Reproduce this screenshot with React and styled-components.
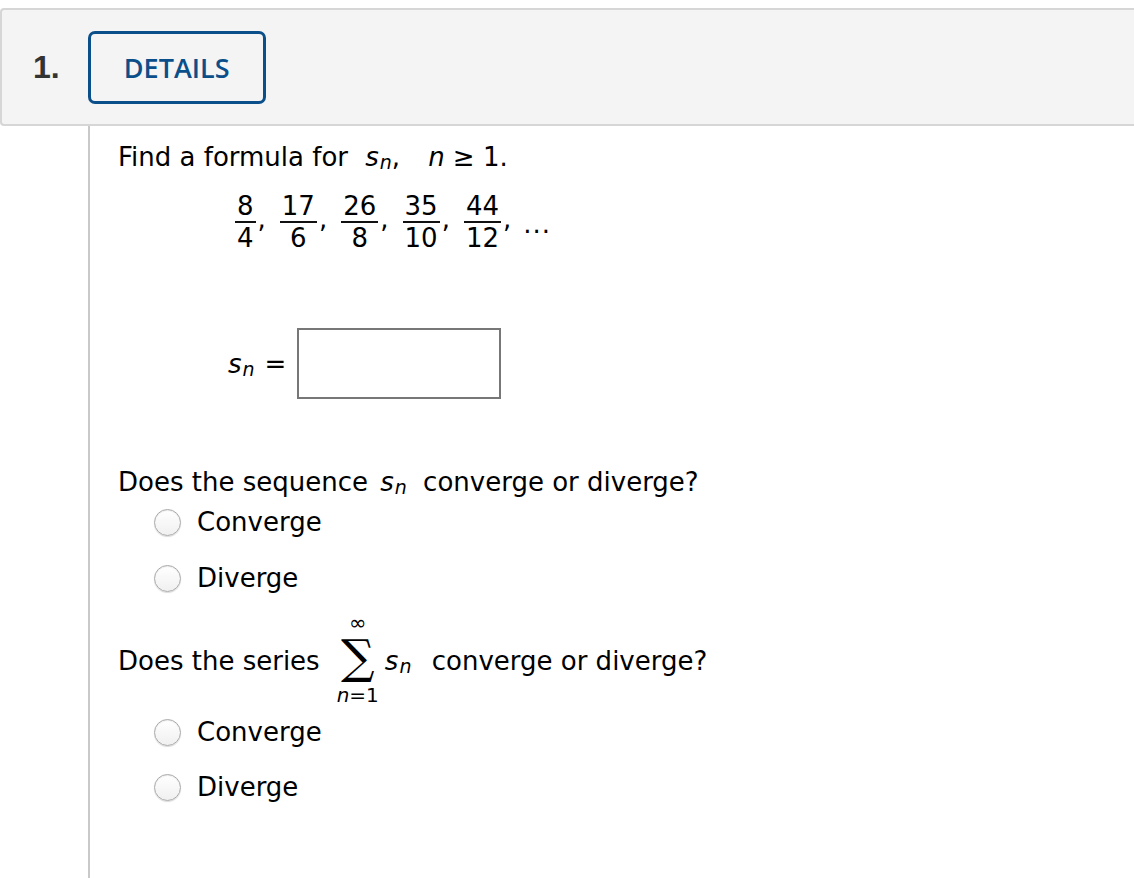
import React from "react";
import styled, { createGlobalStyle } from "styled-components";

const GlobalStyle = createGlobalStyle`
  html, body {
    margin: 0;
    padding: 0;
    background: #ffffff;
  }
  body {
    font-family: "DejaVu Sans", Verdana, sans-serif;
    color: #000;
  }
`;

const Header = styled.div`
  box-sizing: border-box;
  margin-top: 8px;
  height: 118px;
  display: flex;
  align-items: center;
  padding-left: 31px;
  background: #f4f4f4;
  border: 2px solid #d6d6d6;
  border-right: none;
  border-radius: 4px 0 0 4px;
`;

const Number = styled.span`
  font-family: "Liberation Sans", Arial, sans-serif;
  font-weight: 700;
  font-size: 32px;
  color: #333;
`;

const DetailsButton = styled.button`
  box-sizing: border-box;
  margin-left: 28px;
  width: 178px;
  height: 73px;
  border: 3px solid #0b4f8a;
  border-radius: 7px;
  background: transparent;
  color: #0b4f8a;
  font-family: "Open Sans", sans-serif;
  font-weight: 600;
  font-size: 27px;
  padding: 0;
  cursor: pointer;
`;

const Content = styled.div`
  box-sizing: border-box;
  margin-left: 88px;
  min-height: calc(100vh - 126px);
  border-left: 2px solid #c9c9c9;
  padding: 16px 0 40px 28px;
  font-size: 26px;
`;

const Line = styled.div`
  display: flex;
  align-items: center;
  line-height: 30px;
  margin-top: ${(p) => p.$mt || 0}px;
  margin-left: ${(p) => p.$ml || 0}px;
  white-space: pre;
`;

const Var = styled.span`
  font-style: italic;
`;

const Sub = styled.span`
  font-style: italic;
  font-size: 19px;
  position: relative;
  top: 5px;
  margin-left: 1px;
`;

const Gap = styled.span`
  display: inline-block;
  width: ${(p) => p.$w}px;
`;

const Fraction = styled.span`
  display: inline-flex;
  flex-direction: column;
  align-items: center;
  padding: 0 2px;
`;

const Numer = styled.span`
  line-height: 30px;
  padding: 0 2px;
`;

const Rule = styled.span`
  align-self: stretch;
  height: 2px;
  background: #111;
`;

const Denom = styled.span`
  line-height: 30px;
  padding: 0 2px;
`;

const Comma = styled.span`
  margin-bottom: 6px;
  margin-right: 12px;
`;

const Dots = styled.span`
  margin-top: 4px;
  letter-spacing: 1px;
`;

const AnswerBox = styled.input`
  box-sizing: border-box;
  width: 204px;
  height: 71px;
  border: 2px solid #777;
  margin-left: 11px;
  font-size: 22px;
  padding: 0 8px;
  outline: none;
`;

const RadioRow = styled.label`
  display: flex;
  align-items: center;
  line-height: 30px;
  margin-left: 36px;
  margin-top: ${(p) => p.$mt || 0}px;
  cursor: pointer;
`;

const RadioCircle = styled.span`
  box-sizing: border-box;
  width: 27px;
  height: 27px;
  border-radius: 50%;
  border: 1px solid #a9a9a9;
  background: linear-gradient(#ffffff, #f0f0f0);
  box-shadow: inset 0 1px 1px rgba(0, 0, 0, 0.08), 0 1px 1px rgba(0, 0, 0, 0.15);
  margin-right: 16px;
`;

const SigmaBlock = styled.span`
  display: inline-flex;
  flex-direction: column;
  align-items: center;
  margin: 0 6px 0 17px;
`;

const Infinity = styled.span`
  font-size: 21px;
  line-height: 18px;
`;

const Sigma = styled.span`
  font-family: "DejaVu Serif", "Liberation Serif", serif;
  font-size: 47px;
  line-height: 50px;
  height: 50px;
`;

const Lower = styled.span`
  font-size: 20px;
  line-height: 24px;
  margin-top: 1px;
`;

const fractions = [
  ["8", "4"],
  ["17", "6"],
  ["26", "8"],
  ["35", "10"],
  ["44", "12"],
];

function Sn() {
  return (
    <>
      <Var>s</Var>
      <Sub>n</Sub>
    </>
  );
}

function Radio({ label, mt }) {
  return (
    <RadioRow $mt={mt}>
      <RadioCircle />
      {label}
    </RadioRow>
  );
}

export default function App() {
  return (
    <>
      <GlobalStyle />
      <Header>
        <Number>1.</Number>
        <DetailsButton>DETAILS</DetailsButton>
      </Header>
      <Content>
        <Line>
          Find a formula for <Gap $w={9} />
          <Sn />,<Gap $w={28} />
          <Var>n</Var> ≥ 1.
        </Line>
        <Line $mt={19} $ml={115}>
          {fractions.map(([n, d], i) => (
            <React.Fragment key={i}>
              <Fraction>
                <Numer>{n}</Numer>
                <Rule />
                <Denom>{d}</Denom>
              </Fraction>
              <Comma>,</Comma>
            </React.Fragment>
          ))}
          <Dots>...</Dots>
        </Line>
        <Line $mt={75} $ml={110}>
          <Sn />
          <Gap $w={10} />=
          <AnswerBox type="text" />
        </Line>
        <Line $mt={68}>
          Does the sequence <Gap $w={4} />
          <Sn />
          <Gap $w={8} /> converge or diverge?
        </Line>
        <Radio label="Converge" mt={10} />
        <Radio label="Diverge" mt={26} />
        <Line $mt={21}>
          Does the series
          <SigmaBlock>
            <Infinity>∞</Infinity>
            <Sigma>∑</Sigma>
            <Lower>
              <Var>n</Var>=1
            </Lower>
          </SigmaBlock>
          <Sn />
          <Gap $w={12} /> converge or diverge?
        </Line>
        <Radio label="Converge" mt={10} />
        <Radio label="Diverge" mt={25} />
      </Content>
    </>
  );
}
